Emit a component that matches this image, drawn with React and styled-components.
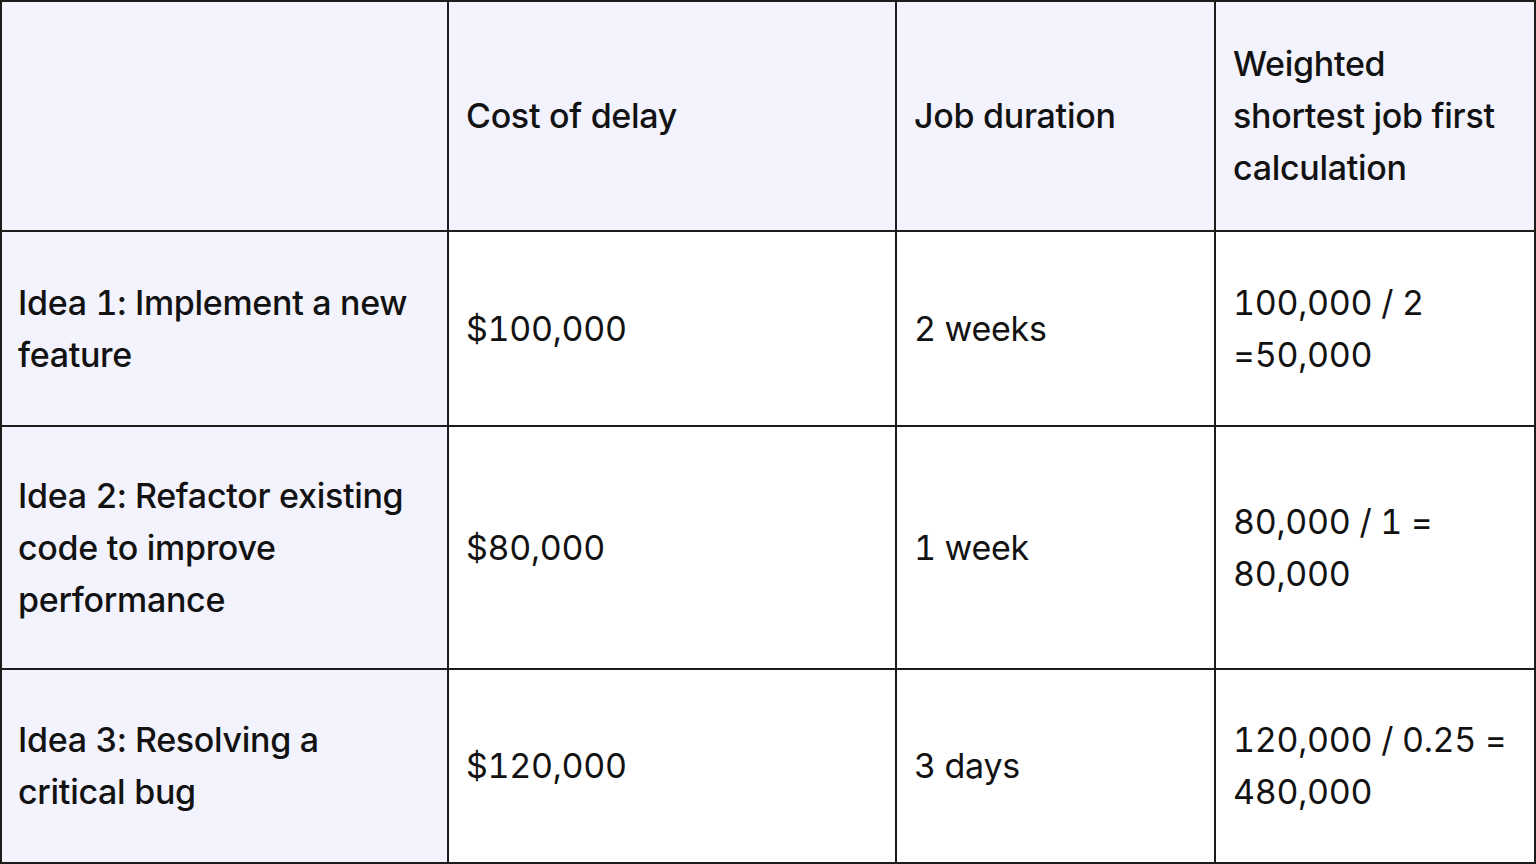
import React from "react";
import styled, { createGlobalStyle } from "styled-components";

const GlobalStyle = createGlobalStyle`
  html, body {
    margin: 0;
    padding: 0;
    background: #ffffff;
  }
  body {
    font-family: Inter, "Noto Sans", sans-serif;
    color: #121212;
  }
`;

const Grid = styled.div`
  width: 1536px;
  height: 864px;
  box-sizing: border-box;
  display: grid;
  grid-template-columns: 447px 448px 319px 320px;
  grid-template-rows: 230px 195px 243px 194px;
  border-top: 2px solid #1c1c1c;
  border-left: 2px solid #1c1c1c;
`;

const Cell = styled.div`
  box-sizing: border-box;
  display: flex;
  align-items: center;
  border-right: 2px solid #1c1c1c;
  border-bottom: 2px solid #1c1c1c;
  padding: 0 14px 0 ${(p) => (p.$first ? 16 : 17)}px;
  font-size: 34px;
  line-height: 52px;
  letter-spacing: -0.3px;
  font-variant-numeric: tabular-nums;
  font-weight: ${(p) => (p.$label ? 500 : 400)};
  background: ${(p) => (p.$shade ? "#f3f3fd" : "#ffffff")};
  color: #121212;
`;

const header = ["", "Cost of delay", "Job duration", "Weighted shortest job first calculation"];

const rows = [
  ["Idea 1: Implement a new feature", "$100,000", "2 weeks", "100,000 / 2 =50,000"],
  ["Idea 2: Refactor existing code to improve performance", "$80,000", "1 week", "80,000 / 1 = 80,000"],
  ["Idea 3: Resolving a critical bug", "$120,000", "3 days", "120,000 / 0.25 = 480,000"],
];

export default function App() {
  return (
    <>
      <GlobalStyle />
      <Grid>
        {header.map((t, i) => (
          <Cell key={`h${i}`} $shade $label $first={i === 0}>
            {t}
          </Cell>
        ))}
        {rows.map((r, ri) =>
          r.map((t, ci) => (
            <Cell key={`${ri}-${ci}`} $shade={ci === 0} $label={ci === 0} $first={ci === 0}>
              {t}
            </Cell>
          ))
        )}
      </Grid>
    </>
  );
}
